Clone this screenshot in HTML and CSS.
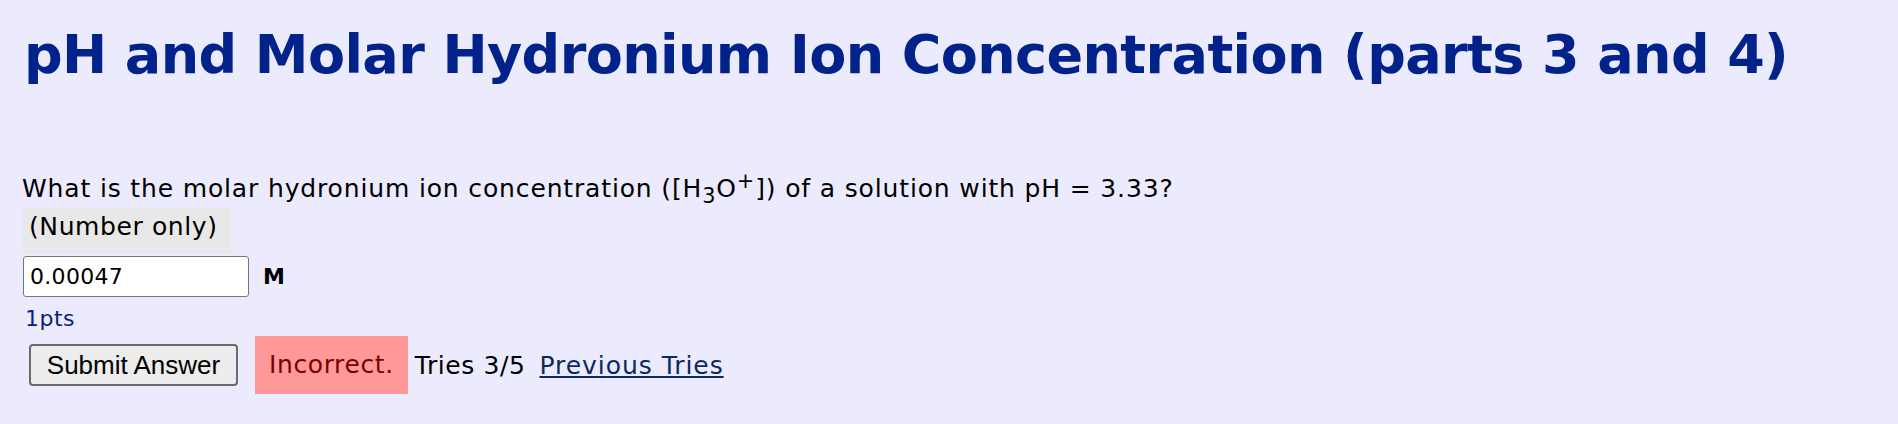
FILE: index.html
```html
<!DOCTYPE html>
<html>
<head>
	<title>pH and Molar Hydronium Ion Concentration</title>
	<meta name="viewport" content="width=device-width">
	<link rel="stylesheet" href="styles.css">
</head>
<body>
	<h1 class="problemTitle">pH and Molar Hydronium Ion Concentration (parts 3 and 4)</h1>

	<div class="problemBlock">
		<p class="questionText">What is the molar hydronium ion concentration ([H<sub>3</sub>O<sup>+</sup>]) of a solution with pH = 3.33?</p>
		<div class="hintLabel">(Number only)</div>
		<div class="answerRow">
			<input class="answerInput" type="text" value="0.00047">
			<b class="answerUnit">M</b>
		</div>
		<div class="pointsLabel">1pts</div>
		<div class="submitRow">
			<button class="submitButton">Submit Answer</button>
			<span class="resultIncorrect">Incorrect.</span>
			<span class="triesText">Tries 3/5</span>
			<a class="previousTries" href="#">Previous Tries</a>
		</div>
	</div>
</body>
</html>
```

FILE: styles.css
```css
/* Base page */
body {
	background-color: #ebebfd;
	color: #000;
	font-family: Verdana, "DejaVu Sans", sans-serif;
	font-size: 25px;
	letter-spacing: 0.6px;
	margin: 0;
	padding: 0 22px;
}

/* Problem title */
.problemTitle {
	color: #00228a;
	font-size: 54px;
	letter-spacing: -0.6px;
	font-weight: bold;
	line-height: 67px;
	white-space: nowrap;
	margin: 21px 0 0 2px;
}

.problemBlock {
	margin-top: 86px;
}

.questionText {
	letter-spacing: 0.85px;
	line-height: 30px;
	margin: 0 0 4px 0;
}

.questionText sub,
.questionText sup {
	line-height: 0;
}

/* Grey "(Number only)" box */
.hintLabel {
	display: inline-block;
	background-color: #e8e8e8;
	line-height: 30px;
	margin-left: 1px;
	padding: 4px 13px 12px 6px;
}

.answerRow {
	display: flex;
	align-items: center;
	gap: 14px;
	margin: 2px 0 0 1px;
}

.answerInput {
	box-sizing: border-box;
	width: 226px;
	height: 41px;
	font-family: Verdana, "DejaVu Sans", sans-serif;
	font-size: 22px;
	letter-spacing: 0.3px;
	padding: 0 6px;
	border: 1px solid #767676;
	border-radius: 3px;
	background: #fff;
	color: #000;
}

.answerUnit {
	font-size: 22px;
	letter-spacing: 0;
}

.pointsLabel {
	color: #0d1d7e;
	font-size: 22px;
	letter-spacing: 0.5px;
	line-height: 26px;
	margin: 9px 0 0 3px;
}

.submitRow {
	display: flex;
	align-items: center;
	margin-top: 4px;
}

.submitButton {
	box-sizing: border-box;
	font-family: "Liberation Sans", Arial, sans-serif;
	font-size: 26px;
	letter-spacing: 0;
	height: 42px;
	width: 209px;
	margin-left: 7px;
	background-color: #ececec;
	border: 2px solid #6b6b6b;
	border-radius: 4px;
	color: #000;
	padding: 0;
	white-space: nowrap;
}

/* Result badge */
.resultIncorrect {
	background-color: #ff9999;
	color: #7a0000;
	line-height: 58px;
	padding: 0 14px;
	margin-left: 17px;
}

.triesText {
	margin-left: 7px;
}

.previousTries {
	color: #0b2a5e;
	letter-spacing: 0.95px;
	text-decoration: underline;
	margin-left: 14px;
}
```
